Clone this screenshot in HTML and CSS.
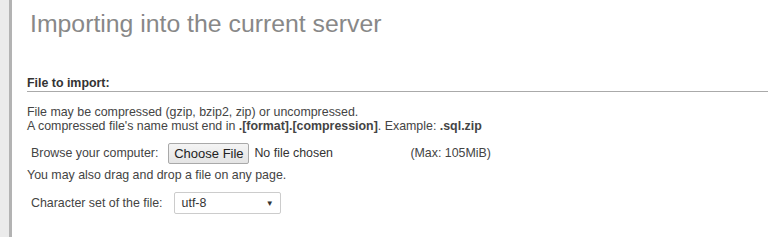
FILE: index.html
```html
<!DOCTYPE html>
<html>
<head>
<meta charset="utf-8">
<link rel="stylesheet" href="styles.css">
</head>
<body>
<div class="layout">
  <div class="nav-edge"></div>
  <main class="content">
    <h2 class="title">Importing into the current server</h2>
    <fieldset class="section">
      <h3 class="legend">File to import:</h3>
      <p class="note">File may be compressed (gzip, bzip2, zip) or uncompressed.<br>A compressed file's name must end in <b>.[format].[compression]</b>. Example: <b>.sql.zip</b></p>
      <div class="row browse">
        <span class="label">Browse your computer:</span>
        <span class="file-input">
          <span class="file-btn">Choose File</span>
          <span class="file-name">No file chosen</span>
        </span>
        <span class="max">(Max: 105MiB)</span>
      </div>
      <p class="drag">You may also drag and drop a file on any page.</p>
      <div class="row charset">
        <span class="label">Character set of the file:</span>
        <span class="select">utf-8<span class="arrow">&#9660;</span></span>
      </div>
    </fieldset>
  </main>
</div>
</body>
</html>
```

FILE: styles.css
```css
html, body {
  margin: 0;
  padding: 0;
  background: #fff;
}
body {
  font-family: "Liberation Sans", Arial, sans-serif;
  font-size: 12.4px;
  color: #444;
  width: 768px;
  height: 237px;
  overflow: hidden;
}
.layout {
  display: flex;
  height: 237px;
}
.nav-edge {
  width: 9px;
  flex: none;
  background: #ebebeb;
  border-right: 3px solid #b3b3b3;
}
.content {
  flex: 1;
  padding-left: 15px;
  min-width: 0;
}
.title {
  margin: 0;
  padding-top: 10px;
  font-size: 24.8px;
  font-weight: normal;
  color: #888;
  line-height: 28px;
  padding-left: 3px;
}
.section {
  border: 0;
  margin: 38px 0 0 0;
  padding: 0;
}
.legend {
  margin: 0;
  font-size: 12.4px;
  font-weight: bold;
  color: #333;
  line-height: 14px;
  padding-bottom: 1px;
  border-bottom: 1px solid #aaa;
}
.note {
  margin: 13px 0 0 0;
  line-height: 14px;
}
.row {
  display: flex;
  align-items: center;
  padding-left: 4px;
}
.browse {
  margin-top: 9px;
  height: 22px;
}
.label {
  color: #444;
}
.file-input {
  margin-left: 10px;
  width: 242px;
  display: flex;
  align-items: center;
}
.file-btn {
  box-sizing: border-box;
  height: 21px;
  width: 81px;
  border: 1px solid #a9a9a9;
  border-radius: 2px;
  background: linear-gradient(#f4f4f4, #e4e4e4);
  color: #222;
  font-size: 13px;
  display: flex;
  align-items: center;
  justify-content: center;
}
.file-name {
  margin-left: 5px;
  color: #333;
}
.max {
  color: #444;
}
.drag {
  margin: 4px 0 0 0;
  line-height: 14px;
}
.charset {
  margin-top: 10px;
}
.select {
  margin-left: 11px;
  box-sizing: border-box;
  width: 107px;
  height: 22px;
  border: 1px solid #ccc;
  border-radius: 2px;
  display: flex;
  align-items: center;
  padding-left: 7px;
  padding-right: 6px;
  justify-content: space-between;
  color: #333;
}
.arrow {
  font-size: 8px;
  color: #333;
}
```
